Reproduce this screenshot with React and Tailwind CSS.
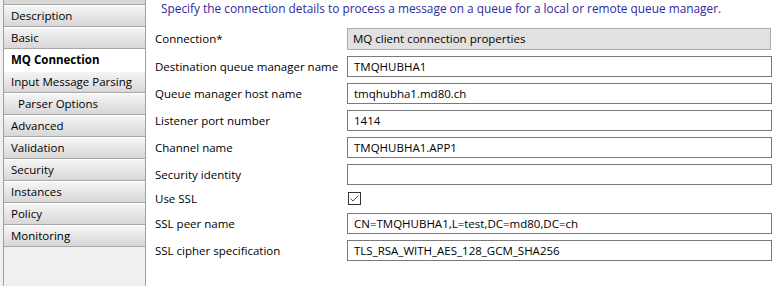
const tabs = [
  { label: 'Description' },
  { label: 'Basic' },
  { label: 'MQ Connection', active: true },
  { label: 'Input Message Parsing' },
  { label: 'Parser Options', indent: true },
  { label: 'Advanced' },
  { label: 'Validation' },
  { label: 'Security' },
  { label: 'Instances' },
  { label: 'Policy' },
  { label: 'Monitoring' },
];

const fields = [
  { label: 'Destination queue manager name', value: 'TMQHUBHA1' },
  { label: 'Queue manager host name', value: 'tmqhubha1.md80.ch' },
  { label: 'Listener port number', value: '1414' },
  { label: 'Channel name', value: 'TMQHUBHA1.APP1' },
  { label: 'Security identity', value: '' },
];

const sslFields = [
  { label: 'SSL peer name', value: 'CN=TMQHUBHA1,L=test,DC=md80,DC=ch' },
  { label: 'SSL cipher specification', value: 'TLS_RSA_WITH_AES_128_GCM_SHA256' },
];

const Tab = ({ label, active, indent }) => {
  if (active) {
    return (
      <div className="flex h-[22px] items-center bg-white pl-[7px] font-bold text-black">
        {label}
      </div>
    );
  }
  return (
    <div
      className={`flex h-[22px] items-center border-t border-b border-t-white border-b-[#a8a8a8] bg-gradient-to-b from-[#f5f5f5] to-[#d7d7d7] text-black ${
        indent ? 'pl-[14px]' : 'pl-[7px]'
      }`}
    >
      {label}
    </div>
  );
};

const Field = ({ label, value }) => (
  <div className="mb-[6px] flex h-[21px] items-center">
    <div className="w-[192px] shrink-0">{label}</div>
    <div className="mr-[1px] flex h-full flex-1 items-center border border-[#7a7a7a] bg-white pl-[6px]">
      {value}
    </div>
  </div>
);

export default function App() {
  return (
    <div className="flex h-[286px] w-[773px] overflow-hidden bg-white font-['Open_Sans',sans-serif] text-[11.5px] leading-none text-black">
      <aside className="flex w-[146px] shrink-0 bg-[#f0f0f0] pl-[3px]">
        <div className="flex flex-1 flex-col border-l border-r border-[#a0a0a0]">
          <div className="h-[5px] border-b border-[#a8a8a8] bg-[#d9d9d9]" />
          {tabs.map((t) => (
            <Tab key={t.label} {...t} />
          ))}
        </div>
      </aside>

      <main className="flex-1 pl-[9px]">
        <div className="h-[28px] pl-[6px] pt-[3px] text-[11.85px] text-[#2d2a9e]">
          Specify the connection details to process a message on a queue for a local or remote queue manager.
        </div>

        <div className="mb-[6px] flex h-[22px] items-center">
          <div className="w-[192px] shrink-0">Connection*</div>
          <div className="mr-[2px] flex h-full flex-1 items-center border border-[#adadad] bg-[#e1e1e1] pl-[5px]">
            MQ client connection properties
          </div>
        </div>

        {fields.map((f) => (
          <Field key={f.label} {...f} />
        ))}

        <div className="mb-[7px] flex h-[15px] items-center">
          <div className="w-[192px] shrink-0">Use SSL</div>
          <div className="ml-[1px] flex h-[13px] w-[13px] items-center justify-center border border-[#333333] bg-white">
            <svg width="11" height="11" viewBox="0 0 11 11">
              <path d="M1.5 5.5 L4 8 L9.5 2.5" fill="none" stroke="#555555" strokeWidth="1" />
            </svg>
          </div>
        </div>

        {sslFields.map((f) => (
          <Field key={f.label} {...f} />
        ))}
      </main>
    </div>
  );
}
